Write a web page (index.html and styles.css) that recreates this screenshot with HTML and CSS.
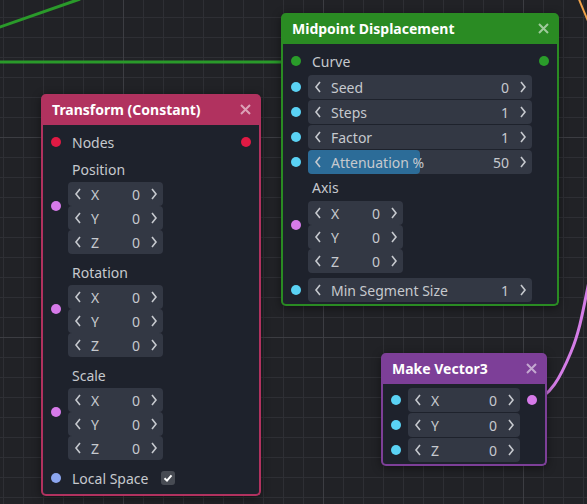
FILE: index.html
```html
<!DOCTYPE html>
<html lang="en">
<head>
  <meta charset="UTF-8">
  <title>Graph</title>
  <link rel="stylesheet" href="styles.css">
</head>
<body>
  <div class="graph">
    <svg class="wires" width="587" height="504">
      <line x1="-4" y1="28.4" x2="80" y2="-1" stroke="#2a9a2a" stroke-width="3"/>
      <line x1="0" y1="62" x2="290" y2="62" stroke="#2a9a2a" stroke-width="3"/>
      <line x1="578" y1="-3" x2="590" y2="26" stroke="#f0a24a" stroke-width="2"/>
      <path d="M532 401 C550 398 561 376 571 352 S584 304 591 272" stroke="#d47de6" stroke-width="3" fill="none"/>
    </svg>

    <!-- Transform (Constant) -->
    <div class="node node-pink" style="left:41px;top:94px;width:220px">
      <div class="title">
        <span>Transform (Constant)</span>
        <svg class="close" width="11" height="11" viewBox="0 0 11 11"><path d="M1 1L10 10M10 1L1 10"/></svg>
      </div>
      <div class="body body-transform">
        <div class="slot first">
          <i class="port left red"></i>
          <span class="label">Nodes</span>
          <i class="port right red"></i>
        </div>
        <div class="group">
          <i class="port left violet"></i>
          <div class="label row">Position</div>
          <div class="slot">
            <div class="vec">
              <div class="spin"><svg class="chev" viewBox="0 0 8 12"><path d="M6 1L2 6L6 11"/></svg><span class="name">X</span><span class="val">0</span><svg class="chev" viewBox="0 0 8 12"><path d="M2 1L6 6L2 11"/></svg></div>
              <div class="spin"><svg class="chev" viewBox="0 0 8 12"><path d="M6 1L2 6L6 11"/></svg><span class="name">Y</span><span class="val">0</span><svg class="chev" viewBox="0 0 8 12"><path d="M2 1L6 6L2 11"/></svg></div>
              <div class="spin"><svg class="chev" viewBox="0 0 8 12"><path d="M6 1L2 6L6 11"/></svg><span class="name">Z</span><span class="val">0</span><svg class="chev" viewBox="0 0 8 12"><path d="M2 1L6 6L2 11"/></svg></div>
            </div>
          </div>
        </div>
        <div class="group">
          <i class="port left violet"></i>
          <div class="label row">Rotation</div>
          <div class="slot">
            <div class="vec">
              <div class="spin"><svg class="chev" viewBox="0 0 8 12"><path d="M6 1L2 6L6 11"/></svg><span class="name">X</span><span class="val">0</span><svg class="chev" viewBox="0 0 8 12"><path d="M2 1L6 6L2 11"/></svg></div>
              <div class="spin"><svg class="chev" viewBox="0 0 8 12"><path d="M6 1L2 6L6 11"/></svg><span class="name">Y</span><span class="val">0</span><svg class="chev" viewBox="0 0 8 12"><path d="M2 1L6 6L2 11"/></svg></div>
              <div class="spin"><svg class="chev" viewBox="0 0 8 12"><path d="M6 1L2 6L6 11"/></svg><span class="name">Z</span><span class="val">0</span><svg class="chev" viewBox="0 0 8 12"><path d="M2 1L6 6L2 11"/></svg></div>
            </div>
          </div>
        </div>
        <div class="group">
          <i class="port left violet"></i>
          <div class="label row">Scale</div>
          <div class="slot">
            <div class="vec">
              <div class="spin"><svg class="chev" viewBox="0 0 8 12"><path d="M6 1L2 6L6 11"/></svg><span class="name">X</span><span class="val">0</span><svg class="chev" viewBox="0 0 8 12"><path d="M2 1L6 6L2 11"/></svg></div>
              <div class="spin"><svg class="chev" viewBox="0 0 8 12"><path d="M6 1L2 6L6 11"/></svg><span class="name">Y</span><span class="val">0</span><svg class="chev" viewBox="0 0 8 12"><path d="M2 1L6 6L2 11"/></svg></div>
              <div class="spin"><svg class="chev" viewBox="0 0 8 12"><path d="M6 1L2 6L6 11"/></svg><span class="name">Z</span><span class="val">0</span><svg class="chev" viewBox="0 0 8 12"><path d="M2 1L6 6L2 11"/></svg></div>
            </div>
          </div>
        </div>
        <div class="slot">
          <i class="port left blue"></i>
          <span class="label">Local Space</span>
          <span class="check"><svg width="14" height="14" viewBox="0 0 14 14"><path d="M3.5 7.2L6 9.6L10.5 4.4"/></svg></span>
        </div>
      </div>
    </div>

    <!-- Midpoint Displacement -->
    <div class="node node-green" style="left:281px;top:13px;width:278px">
      <div class="title">
        <span>Midpoint Displacement</span>
        <svg class="close" width="11" height="11" viewBox="0 0 11 11"><path d="M1 1L10 10M10 1L1 10"/></svg>
      </div>
      <div class="body body-mid">
        <div class="slot curve">
          <i class="port left green"></i>
          <span class="label">Curve</span>
          <i class="port right green"></i>
        </div>
        <div class="stack">
          <div class="slot">
            <i class="port left cyan"></i>
            <div class="spin wide"><svg class="chev" viewBox="0 0 8 12"><path d="M6 1L2 6L6 11"/></svg><span class="name">Seed</span><span class="val">0</span><svg class="chev" viewBox="0 0 8 12"><path d="M2 1L6 6L2 11"/></svg></div>
          </div>
          <div class="slot">
            <i class="port left cyan"></i>
            <div class="spin wide"><svg class="chev" viewBox="0 0 8 12"><path d="M6 1L2 6L6 11"/></svg><span class="name">Steps</span><span class="val">1</span><svg class="chev" viewBox="0 0 8 12"><path d="M2 1L6 6L2 11"/></svg></div>
          </div>
          <div class="slot">
            <i class="port left cyan"></i>
            <div class="spin wide"><svg class="chev" viewBox="0 0 8 12"><path d="M6 1L2 6L6 11"/></svg><span class="name">Factor</span><span class="val">1</span><svg class="chev" viewBox="0 0 8 12"><path d="M2 1L6 6L2 11"/></svg></div>
          </div>
          <div class="slot">
            <i class="port left cyan"></i>
            <div class="spin wide"><span class="fill" style="width:50%"></span><svg class="chev" viewBox="0 0 8 12"><path d="M6 1L2 6L6 11"/></svg><span class="name">Attenuation %</span><span class="val">50</span><svg class="chev" viewBox="0 0 8 12"><path d="M2 1L6 6L2 11"/></svg></div>
          </div>
        </div>
        <div class="group">
          <i class="port left violet"></i>
          <div class="label row">Axis</div>
          <div class="slot">
            <div class="vec">
              <div class="spin"><svg class="chev" viewBox="0 0 8 12"><path d="M6 1L2 6L6 11"/></svg><span class="name">X</span><span class="val">0</span><svg class="chev" viewBox="0 0 8 12"><path d="M2 1L6 6L2 11"/></svg></div>
              <div class="spin"><svg class="chev" viewBox="0 0 8 12"><path d="M6 1L2 6L6 11"/></svg><span class="name">Y</span><span class="val">0</span><svg class="chev" viewBox="0 0 8 12"><path d="M2 1L6 6L2 11"/></svg></div>
              <div class="spin"><svg class="chev" viewBox="0 0 8 12"><path d="M6 1L2 6L6 11"/></svg><span class="name">Z</span><span class="val">0</span><svg class="chev" viewBox="0 0 8 12"><path d="M2 1L6 6L2 11"/></svg></div>
            </div>
          </div>
        </div>
        <div class="slot">
          <i class="port left cyan"></i>
          <div class="spin wide"><svg class="chev" viewBox="0 0 8 12"><path d="M6 1L2 6L6 11"/></svg><span class="name">Min Segment Size</span><span class="val">1</span><svg class="chev" viewBox="0 0 8 12"><path d="M2 1L6 6L2 11"/></svg></div>
        </div>
      </div>
    </div>

    <!-- Make Vector3 -->
    <div class="node node-purple" style="left:381px;top:353px;width:166px">
      <div class="title">
        <span>Make Vector3</span>
        <svg class="close" width="11" height="11" viewBox="0 0 11 11"><path d="M1 1L10 10M10 1L1 10"/></svg>
      </div>
      <div class="body body-vec">
        <div class="slot">
          <i class="port left cyan"></i>
          <div class="spin wide"><svg class="chev" viewBox="0 0 8 12"><path d="M6 1L2 6L6 11"/></svg><span class="name">X</span><span class="val">0</span><svg class="chev" viewBox="0 0 8 12"><path d="M2 1L6 6L2 11"/></svg></div>
          <i class="port right violet"></i>
        </div>
        <div class="slot">
          <i class="port left cyan"></i>
          <div class="spin wide"><svg class="chev" viewBox="0 0 8 12"><path d="M6 1L2 6L6 11"/></svg><span class="name">Y</span><span class="val">0</span><svg class="chev" viewBox="0 0 8 12"><path d="M2 1L6 6L2 11"/></svg></div>
        </div>
        <div class="slot">
          <i class="port left cyan"></i>
          <div class="spin wide"><svg class="chev" viewBox="0 0 8 12"><path d="M6 1L2 6L6 11"/></svg><span class="name">Z</span><span class="val">0</span><svg class="chev" viewBox="0 0 8 12"><path d="M2 1L6 6L2 11"/></svg></div>
        </div>
      </div>
    </div>
  </div>
</body>
</html>
```

FILE: styles.css
```css
*{
  margin: 0;
  padding: 0;
  box-sizing: border-box;
}
body{
  background: #212226;
  font-family: "Noto Sans", "DejaVu Sans", sans-serif;
  font-size: 14px;
  color: #c6c9ce;
}
.graph{
  position: relative;
  width: 587px;
  height: 504px;
  overflow: hidden;
  background-color: #212226;
  background-image:
    linear-gradient(to right, #3c3d42 1px, transparent 1px),
    linear-gradient(to bottom, #3c3d42 1px, transparent 1px),
    linear-gradient(to right, #2e2f34 1px, transparent 1px),
    linear-gradient(to bottom, #2e2f34 1px, transparent 1px);
  background-size: 200px 200px, 200px 200px, 20px 20px, 20px 20px;
  background-position: 123px 137px, 123px 137px, 3px 17px, 3px 17px;
}
.wires{
  position: absolute;
  left: 0;
  top: 0;
}

/* nodes */
.node{
  position: absolute;
  border-radius: 5px;
  box-shadow: 0 2px 10px rgba(0,0,0,.45);
}
.title{
  height: 31px;
  padding: 0 10px 1px 11px;
  display: flex;
  align-items: center;
  justify-content: space-between;
  border-radius: 5px 5px 0 0;
  color: #fff;
  font-weight: bold;
  font-size: 14px;
}
.close path{
  stroke: rgba(255,255,255,.55);
  stroke-width: 2;
  fill: none;
}
.body{
  background: #1e222c;
  border: 2px solid;
  border-top: none;
  border-radius: 0 0 5px 5px;
  display: flex;
  flex-direction: column;
}
.node-pink .title{ background: #b1325f; }
.node-pink .body{ border-color: #b1325f; }
.node-green .title{ background: #2a8b23; }
.node-green .body{ border-color: #2a8b23; }
.node-purple .title{ background: #7d3f98; }
.node-purple .body{ border-color: #7d3f98; }

.body-transform{
  padding: 5px 0 4px;
  gap: 6px;
}
.body-transform .first{
  margin-bottom: -3px;
}
.body-transform .label.row{
  line-height: 25px;
}
.body-mid{
  padding: 5px 0 2px;
  gap: 2px;
}
.body-mid .group{
  margin-bottom: 3px;
}
.body-vec{
  padding: 4px 0 2px;
  gap: 1px;
}
.stack{
  display: flex;
  flex-direction: column;
  gap: 1px;
}
.group{
  position: relative;
}

/* slots */
.slot{
  position: relative;
  display: flex;
  align-items: center;
  min-height: 24px;
  padding: 0 25px;
}
.label{
  padding-left: 4px;
}
.label.row{
  height: 25px;
  line-height: 24px;
  padding-left: 29px;
}
.port{
  position: absolute;
  top: 50%;
  width: 10px;
  height: 10px;
  margin-top: -5px;
  border-radius: 50%;
}
.port.left{ left: 8px; }
.port.right{ right: 8px; }
.red{ background: #e01a44; }
.violet{ background: #d67ae9; }
.cyan{ background: #5ad2f4; }
.green{ background: #2a9c2a; }
.blue{ background: #8ca6f0; }

/* spin boxes */
.vec{
  width: 95px;
  display: flex;
  flex-direction: column;
}
.spin{
  position: relative;
  display: flex;
  align-items: center;
  height: 24px;
  padding: 0 5px 0 6px;
  background: #333844;
  border-radius: 4px;
  color: #c6c9ce;
}
.spin.wide{
  flex: 1;
}
.fill{
  position: absolute;
  left: 0;
  top: 0;
  bottom: 0;
  background: #2c6c98;
  border-radius: 4px;
}
.chev{
  position: relative;
  width: 8px;
  height: 12px;
  flex: none;
}
.chev path{
  stroke: #c6c9ce;
  stroke-width: 1.6;
  fill: none;
}
.name{
  position: relative;
  flex: 1;
  margin-left: 9px;
  white-space: nowrap;
}
.val{
  position: relative;
  margin-right: 10px;
}
.check{
  width: 14px;
  height: 14px;
  margin-left: 13px;
  background: #474b53;
  border-radius: 3px;
}
.check svg{
  display: block;
}
.check path{
  stroke: #fff;
  stroke-width: 2;
  fill: none;
}
```
